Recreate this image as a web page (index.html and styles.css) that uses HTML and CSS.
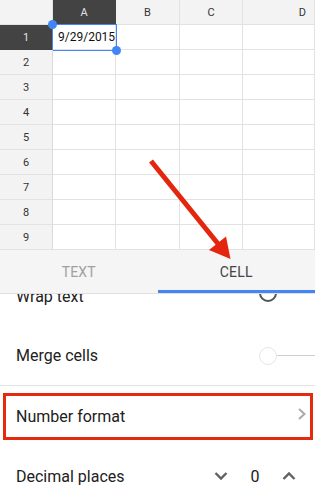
FILE: index.html
```html
<!DOCTYPE html>
<html>
<head>
<meta charset="utf-8">
<link rel="stylesheet" href="styles.css">
</head>
<body>
<div class="screen">
  <div class="sheet">
    <div class="cell corner"></div>
    <div class="cell colhead active">A</div>
    <div class="cell colhead">B</div>
    <div class="cell colhead">C</div>
    <div class="cell colhead d">D</div>

    <div class="cell rowhead active">1</div>
    <div class="cell data selected">9/29/2015
      <span class="handle tl"></span><span class="handle br"></span>
    </div>
    <div class="cell"></div><div class="cell"></div><div class="cell"></div>

    <div class="cell rowhead">2</div><div class="cell"></div><div class="cell"></div><div class="cell"></div><div class="cell"></div>
    <div class="cell rowhead">3</div><div class="cell"></div><div class="cell"></div><div class="cell"></div><div class="cell"></div>
    <div class="cell rowhead">4</div><div class="cell"></div><div class="cell"></div><div class="cell"></div><div class="cell"></div>
    <div class="cell rowhead">5</div><div class="cell"></div><div class="cell"></div><div class="cell"></div><div class="cell"></div>
    <div class="cell rowhead">6</div><div class="cell"></div><div class="cell"></div><div class="cell"></div><div class="cell"></div>
    <div class="cell rowhead">7</div><div class="cell"></div><div class="cell"></div><div class="cell"></div><div class="cell"></div>
    <div class="cell rowhead">8</div><div class="cell"></div><div class="cell"></div><div class="cell"></div><div class="cell"></div>
    <div class="cell rowhead">9</div><div class="cell"></div><div class="cell"></div><div class="cell"></div><div class="cell"></div>
  </div>

  <div class="tabs">
    <div class="tab">TEXT</div>
    <div class="tab on">CELL</div>
  </div>

  <div class="panel">
    <div class="list">
      <div class="row">
        <span class="label">Wrap text</span>
        <span class="toggle wrap"><span class="knob dark"></span></span>
      </div>
      <div class="row sep">
        <span class="label">Merge cells</span>
        <span class="toggle"><span class="knob"></span><span class="track"></span></span>
      </div>
      <div class="row boxed">
        <span class="label">Number format</span>
        <svg class="chev" width="10" height="14" viewBox="0 0 10 14"><polyline points="2,2 7.5,7 2,12" fill="none" stroke="#aaaaaa" stroke-width="2"/></svg>
        <span class="redbox"></span>
      </div>
      <div class="row">
        <span class="label">Decimal places</span>
        <span class="stepper">
          <svg width="14" height="10" viewBox="0 0 14 10"><polyline points="1.5,2 7,7.5 12.5,2" fill="none" stroke="#616161" stroke-width="2.4"/></svg>
          <span class="num">0</span>
          <svg width="14" height="10" viewBox="0 0 14 10"><polyline points="1.5,8 7,2.5 12.5,8" fill="none" stroke="#616161" stroke-width="2.4"/></svg>
        </span>
      </div>
    </div>
  </div>

  <svg class="arrow" width="315" height="500" viewBox="0 0 315 500">
    <line x1="151" y1="161" x2="219" y2="245" stroke="#e3260d" stroke-width="5" stroke-linecap="butt"/>
    <polygon points="230.5,259 209,250 226,236.5" fill="#e3260d"/>
  </svg>
</div>
</body>
</html>
```

FILE: styles.css
```css
* { box-sizing: border-box; }
html, body { margin: 0; padding: 0; background: #fff; }
body { font-family: Roboto, "Noto Sans", Arial, sans-serif; }
.screen { position: relative; width: 315px; height: 500px; overflow: hidden; background: #fff; }

.sheet {
  display: grid;
  grid-template-columns: 53px 63px 64px 63px 1fr;
  grid-auto-rows: 25px;
  height: 250px;
}
.cell {
  border-right: 1.5px solid #e2e2e2;
  border-bottom: 1.5px solid #e2e2e2;
  position: relative;
}
.corner, .colhead, .rowhead { background: #f3f3f3; }
.colhead, .rowhead {
  display: flex; align-items: center; justify-content: center;
  font-size: 11px; color: #333;
}
.colhead.d { justify-content: flex-end; padding-right: 8px; }
.colhead.active, .rowhead.active { background: #434343; color: #e0e0e0; border-color: #434343; }
.rowhead { border-right-color: #d9d9d9; }

.data {
  display: flex; align-items: center; padding-left: 5px;
  font-size: 12px; color: #111;
}
.selected::after {
  content: ""; position: absolute; left: -1px; top: -1px; right: -1.5px; bottom: -1.5px;
  border: 1.5px solid #4285f4;
}
.handle {
  position: absolute; width: 9px; height: 9px; border-radius: 50%;
  background: #4285f4; z-index: 2;
}
.handle.tl { left: -5.5px; top: -5.5px; }
.handle.br { right: -6px; bottom: -5.5px; }

.tabs {
  display: flex; height: 44px;
  background: #f5f5f5;
  border-bottom: 1px solid #e0e0e0;
}
.tab {
  flex: 1; display: flex; align-items: center; justify-content: center;
  font-size: 14px; color: #a0a0a0; letter-spacing: 0.2px;
}
.tab.on { color: #444; box-shadow: inset 0 -3px 0 #4285f4; }

.panel { height: 206px; overflow: hidden; }
.list { margin-top: -28px; }
.row {
  position: relative;
  display: flex; align-items: center; justify-content: space-between;
  height: 60px; padding: 0 16px;
  font-size: 16px; color: #212121;
}
.row.sep { border-bottom: 1px solid #e3e3e3; }
.toggle { display: flex; align-items: center; width: 56px; margin-right: -16px; margin-left: auto; }
.toggle.wrap { margin-bottom: 6px; }
.knob {
  width: 18px; height: 18px; border-radius: 50%;
  border: 1.5px solid #e6e6e6; background: #fff; flex: none;
}
.knob.dark { border: 2px solid #555; }
.track { flex: 1; height: 1.5px; background: #cfcfcf; }

.chev { margin-right: -8px; margin-top: -4px; }
.redbox {
  position: absolute; left: 3px; right: 2px; top: 7px; bottom: 6px;
  border: 3px solid #e42a0f;
}
.stepper { display: flex; align-items: center; gap: 22px; margin-right: 3px; }
.stepper svg { margin-top: 0; }
.num { font-size: 16px; color: #212121; width: 10px; text-align: center; }

.arrow { position: absolute; left: 0; top: 0; pointer-events: none; }
```
